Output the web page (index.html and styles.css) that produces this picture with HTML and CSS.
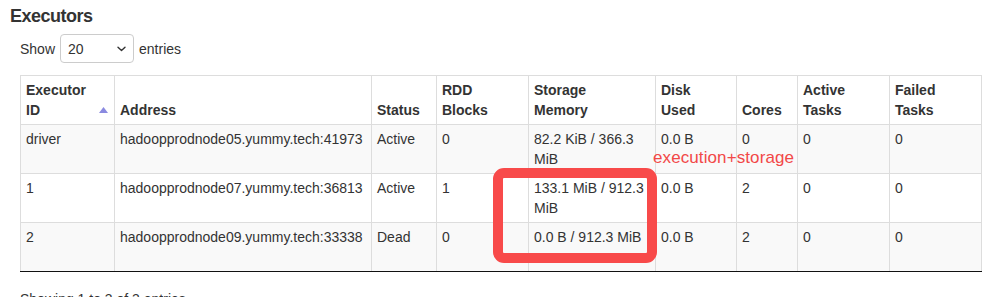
FILE: index.html
```html
<!DOCTYPE html>
<html>
<head>
<meta charset="utf-8">
<link rel="stylesheet" href="styles.css">
</head>
<body>
<div class="page">
  <h4 class="title">Executors</h4>
  <div class="length">
    <span>Show</span>
    <div class="select"><span class="val">20</span><svg class="chev" width="9" height="6" viewBox="0 0 9 6"><path d="M1 1.2 L4.5 4.5 L8 1.2" fill="none" stroke="#333" stroke-width="1.4" stroke-linecap="round" stroke-linejoin="round"/></svg></div>
    <span>entries</span>
  </div>
  <div class="tablewrap">
    <table class="exec">
      <colgroup>
        <col class="c1"><col class="c2"><col class="c3"><col class="c4"><col class="c5"><col class="c6"><col class="c7"><col class="c8"><col class="c9">
      </colgroup>
      <thead>
        <tr>
          <th class="sorted">Executor<br>ID<svg class="sort" width="9" height="6" viewBox="0 0 9 6"><path d="M4.5 0 L9 6 L0 6 Z" fill="#8a8ae0"/></svg></th>
          <th>Address</th>
          <th>Status</th>
          <th>RDD<br>Blocks</th>
          <th>Storage<br>Memory</th>
          <th>Disk<br>Used</th>
          <th>Cores</th>
          <th>Active<br>Tasks</th>
          <th>Failed<br>Tasks</th>
        </tr>
      </thead>
      <tbody>
        <tr class="odd">
          <td>driver</td><td>hadoopprodnode05.yummy.tech:41973</td><td>Active</td><td>0</td><td>82.2 KiB / 366.3 MiB</td><td>0.0 B</td><td>0</td><td>0</td><td>0</td>
        </tr>
        <tr class="even">
          <td>1</td><td>hadoopprodnode07.yummy.tech:36813</td><td>Active</td><td>1</td><td>133.1 MiB / 912.3 MiB</td><td>0.0 B</td><td>2</td><td>0</td><td>0</td>
        </tr>
        <tr class="odd">
          <td>2</td><td>hadoopprodnode09.yummy.tech:33338</td><td>Dead</td><td>0</td><td>0.0 B / 912.3 MiB</td><td>0.0 B</td><td>2</td><td>0</td><td>0</td>
        </tr>
      </tbody>
    </table>
    <div class="note">execution+storage</div>
    <div class="highlight"></div>
  </div>
  <div class="info">Showing 1 to 3 of 3 entries</div>
</div>
</body>
</html>
```
FILE: styles.css
```css
html, body {
  margin: 0;
  padding: 0;
  background: #fff;
}
body {
  font-family: "Liberation Sans", Arial, Helvetica, sans-serif;
  font-size: 14px;
  line-height: 20px;
  color: #333;
}
.page {
  padding: 0 10px;
}
.title {
  margin: 0;
  padding-top: 5px;
  font-size: 18px;
  line-height: 22px;
  font-weight: bold;
  letter-spacing: -0.5px;
  color: #333;
}
.length {
  display: flex;
  align-items: center;
  gap: 5px;
  margin-top: 7px;
  padding-left: 10px;
  height: 29px;
}
.select {
  position: relative;
  width: 74px;
  height: 29px;
  box-sizing: border-box;
  border: 1px solid #ccc;
  border-radius: 4px;
  display: flex;
  align-items: center;
  justify-content: space-between;
  padding: 0 7px 0 7px;
  background: #fff;
}
.select .val {
  font-size: 14px;
}
.chev {
  margin-top: 1px;
}
.tablewrap {
  position: relative;
  margin-top: 12px;
  padding-left: 10px;
}
table.exec {
  border-collapse: collapse;
  table-layout: fixed;
  width: 961px;
  border-bottom: 1px solid #111;
}
col.c1 { width: 94px; }
col.c2 { width: 257px; }
col.c3 { width: 65px; }
col.c4 { width: 92px; }
col.c5 { width: 127px; }
col.c6 { width: 81px; }
col.c7 { width: 61px; }
col.c8 { width: 92px; }
col.c9 { width: 92px; }
table.exec th,
table.exec td {
  border: 1px solid #ddd;
  padding: 4px 5px;
  text-align: left;
  vertical-align: bottom;
  line-height: 20px;
  height: 40px;
  box-sizing: content-box;
}
table.exec th {
  font-weight: bold;
  position: relative;
}
table.exec td {
  vertical-align: top;
}
table.exec tbody tr:last-child td {
  border-bottom: 1px solid #111;
}
tr.odd td {
  background: #f9f9f9;
}
tr.even td {
  background: #fff;
}
.sort {
  position: absolute;
  right: 6px;
  bottom: 11px;
}
.note {
  position: absolute;
  left: 643px;
  top: 73px;
  color: #f24848;
  font-size: 17px;
  line-height: 20px;
  letter-spacing: 0.1px;
}
.highlight {
  position: absolute;
  left: 483px;
  top: 93px;
  width: 164px;
  height: 95px;
  box-sizing: border-box;
  border: 10px solid #f84a4a;
  border-radius: 11px;
}
.info {
  margin-top: 17px;
  padding-left: 10px;
}
```
